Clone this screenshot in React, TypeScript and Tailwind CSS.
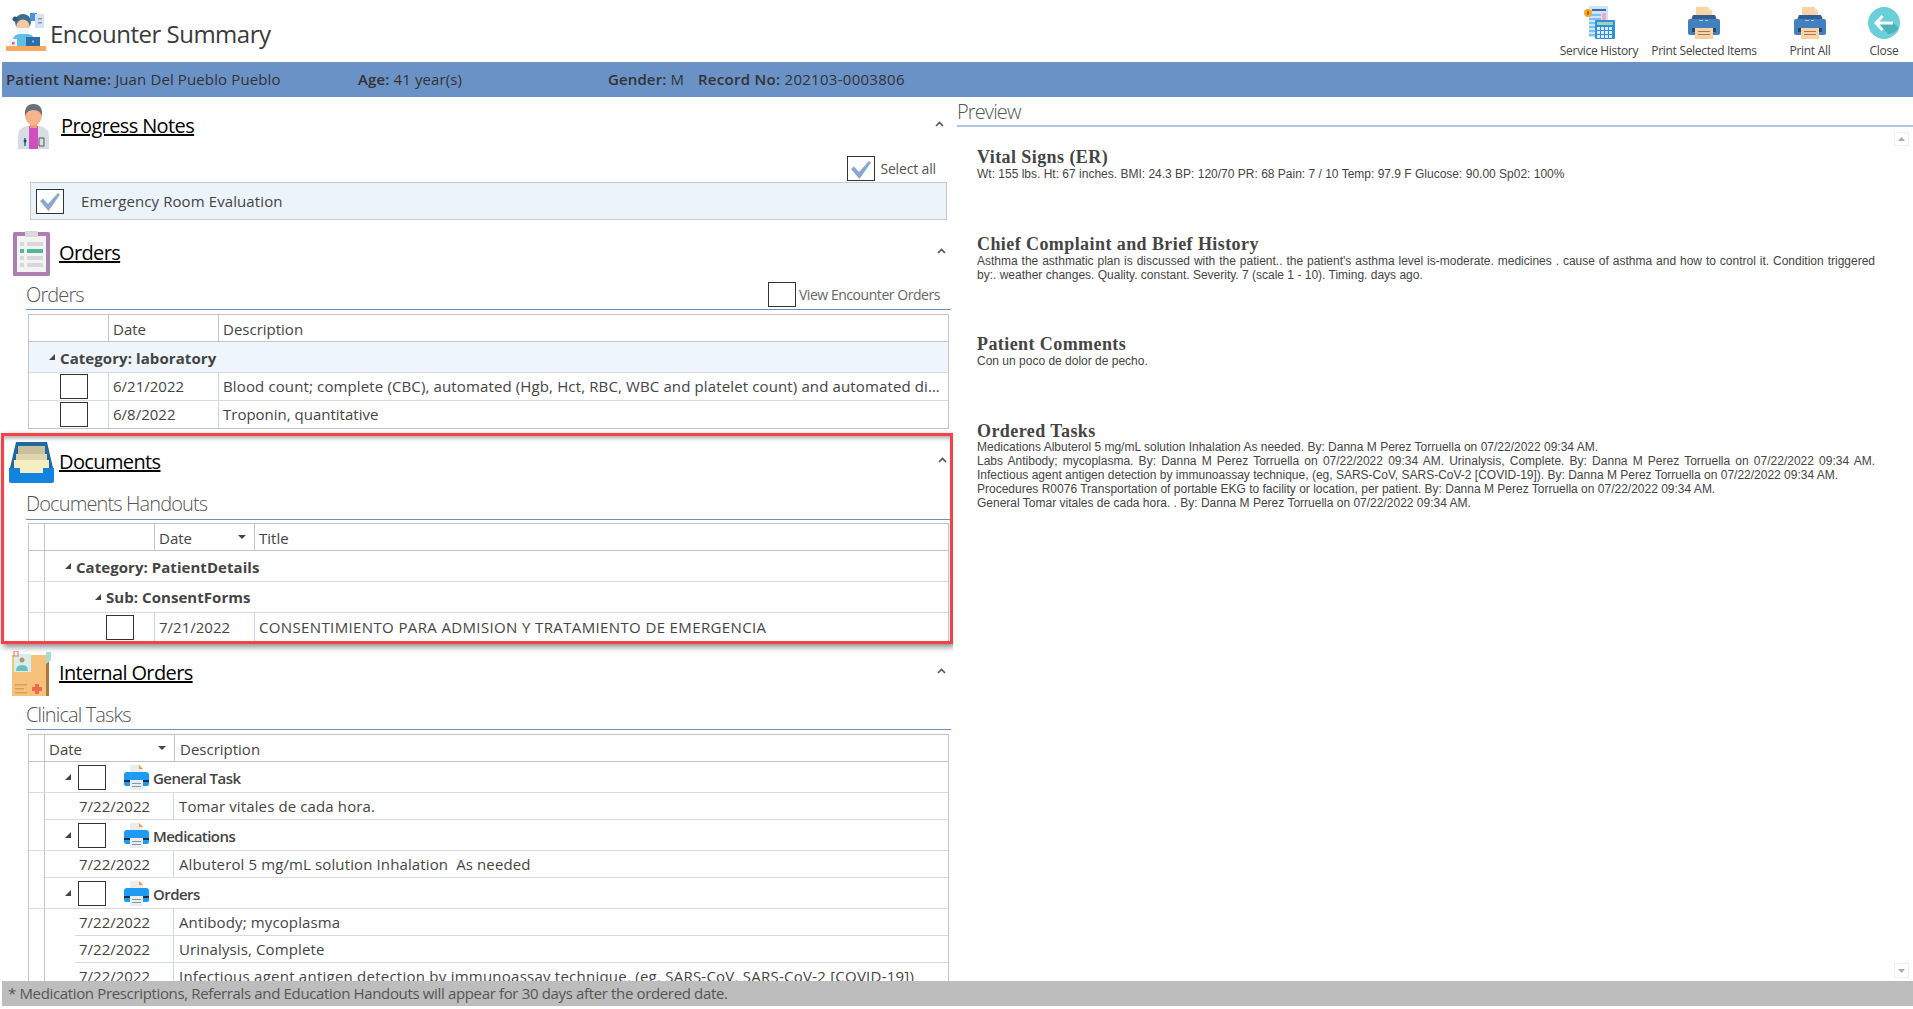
import React from 'react';

/* ---------- small drawings ---------- */

const NurseIcon = () => (
  <svg width="40" height="38" viewBox="0 0 40 38" className="shrink-0">
    <rect x="24" y="0" width="7" height="8" fill="#4d90e0" />
    <rect x="29" y="1" width="9" height="14" fill="#d5e2f2" />
    <rect x="32" y="5" width="4" height="1.5" fill="#7f9cc0" />
    <rect x="32" y="9" width="4" height="1.5" fill="#7f9cc0" />
    <circle cx="17" cy="9" r="8" fill="#3d6f8e" />
    <circle cx="9" cy="6" r="2.5" fill="#2f5a75" />
    <ellipse cx="17" cy="13" rx="6.5" ry="6.5" fill="#f7c6a3" />
    <path d="M10.5 15 h13 v3 a6.5 5 0 0 1 -13 0z" fill="#f3f6f8" />
    <path d="M7 33 v-6 q0-5 6-6 h9 q6 1 6 6 v6z" fill="#62bde8" />
    <rect x="3" y="26" width="8" height="8" fill="#f2f2f5" />
    <rect x="6" y="29" width="2.5" height="2.5" fill="#e8558c" />
    <rect x="20" y="24" width="14" height="9" fill="#2c6fa8" />
    <circle cx="27" cy="28.5" r="1" fill="#9fd0f0" />
    <rect x="0" y="33" width="40" height="5" fill="#f8a95e" />
  </svg>
);

const DoctorIcon = () => (
  <svg width="31" height="45" viewBox="0 0 31 45" className="shrink-0">
    <path d="M0 45 v-13 q0-8 9-10 h13 q9 2 9 10 v13z" fill="#d9dde2" />
    <rect x="11" y="22" width="9" height="23" fill="#cf4fc0" />
    <rect x="12" y="14" width="7" height="10" fill="#ee9e6c" />
    <ellipse cx="15.5" cy="11" rx="8.5" ry="10.5" fill="#f6b48c" />
    <path d="M7 12 q-1-12 8.5-12 q9.5 0 8.5 12 q-2-6-8.5-6 q-6.500 0-8.500 6z" fill="#6b6f78" />
    <rect x="6" y="34" width="2" height="8" fill="#2a98c8" />
    <circle cx="7" cy="37" r="1.500" fill="#38424c" />
    <path d="M21 34 h5 v8 h-5z" fill="none" stroke="#4d5660" strokeWidth="1" />
  </svg>
);

const ClipboardIcon = () => (
  <svg width="37" height="45" viewBox="0 0 37 45" className="shrink-0">
    <rect x="0" y="1" width="37" height="44" rx="1.500" fill="#ad7fb0" />
    <rect x="4" y="5" width="29" height="36" fill="#f3f3f3" />
    <rect x="12" y="0" width="13" height="6" rx="1" fill="#d9d9d9" />
    {[11, 25, 32].map((y) => (
      <g key={y}>
        <rect x="7" y={y} width="4" height="4" fill="#d8d8d8" />
        <rect x="14" y={y} width="16" height="4" fill="#d8d8d8" />
      </g>
    ))}
    <rect x="7" y="18" width="4" height="4" fill="#4db89a" />
    <rect x="14" y="18" width="16" height="4" fill="#4db89a" />
  </svg>
);

const TrayIcon = () => (
  <svg width="45" height="41" viewBox="0 0 45 41" className="shrink-0">
    <path d="M7 0 h31 l6 26 h-43z" fill="#1f689f" />
    <rect x="9" y="4" width="27" height="9" fill="#c9c09b" />
    <rect x="7" y="12" width="31" height="8" fill="#dfd6ad" />
    <path d="M5 18 h35 v8 h-6 v5 h-23 v-5 h-6z" fill="#f5eec2" />
    <path d="M0 26 h11 v5 h23 v-5 h11 v13 q0 2-2 2 h-41 q-2 0-2-2z" fill="#1483e0" />
  </svg>
);

const PackageIcon = () => (
  <svg width="39" height="45" viewBox="0 0 39 45" className="shrink-0">
    <rect x="0" y="4" width="36" height="41" fill="#f6c27b" />
    <rect x="34" y="8" width="3" height="37" fill="#a97743" />
    <path d="M34 1 h5 v8 l-5 4z" fill="#a5dcd8" />
    <rect x="2" y="3" width="17" height="18" fill="#d5eeee" />
    <rect x="2" y="0" width="4" height="5" fill="#fff" stroke="#e86a5a" strokeWidth="1" />
    <circle cx="10" cy="9" r="2.500" fill="#c98f63" />
    <path d="M4 20 q0-6 6-6 q6 0 6 6z" fill="#6cc0b8" />
    <rect x="3" y="33" width="12" height="1.500" fill="#d69f5c" />
    <rect x="3" y="37" width="9" height="1.500" fill="#d69f5c" />
    <rect x="3" y="41" width="12" height="1.500" fill="#d69f5c" />
    <path d="M23 33 h4 v3 h3 v4 h-3 v3 h-4 v-3 h-3 v-4 h3z" fill="#ef6a4a" />
  </svg>
);

const BigPrinter = () => (
  <svg width="32" height="32" viewBox="0 0 32 32">
    <path d="M8 0 h12 l4 4 v9 h-16z" fill="#fad2a4" />
    <path d="M20 0 l4 4 h-4z" fill="#e5e3dd" />
    <path d="M5 8 h22 l2 5 h-26z" fill="#2f5f95" />
    <rect x="0" y="12" width="32" height="16" rx="2" fill="#4480c0" />
    <rect x="11" y="13" width="4" height="1" fill="#a9c6e6" />
    <rect x="17" y="13" width="3" height="1" fill="#a9c6e6" />
    <rect x="4" y="21" width="24" height="4" fill="#24466e" />
    <rect x="7" y="21" width="18" height="11" fill="#fad2a4" />
    <rect x="10" y="24" width="12" height="1" fill="#9a7a58" />
    <rect x="10" y="27" width="12" height="1" fill="#9a7a58" />
  </svg>
);

const SmallPrinter = () => (
  <svg width="25" height="25" viewBox="0 0 25 25" className="shrink-0">
    <path d="M6 0 h9 l4 4 v6 h-13z" fill="#e8edf1" />
    <path d="M15 0 l4 4 h-4z" fill="#f59a2e" />
    <path d="M3 7 h19 q3 0 3 3 v9 q0 2-2 2 h-21 q-2 0-2-2 v-9 q0-3 3-3z" fill="#1e9bf0" />
    <rect x="0" y="15" width="25" height="2" fill="#1c2f42" />
    <rect x="6" y="15" width="13" height="10" fill="#e8edf1" />
    <rect x="8" y="18" width="9" height="1" fill="#8a949c" />
    <rect x="8" y="21" width="9" height="1" fill="#8a949c" />
  </svg>
);

const HistoryIcon = () => (
  <svg width="31" height="33" viewBox="0 0 31 33">
    <rect x="5" y="0" width="19" height="31" fill="#cfe2f8" />
    <rect x="8" y="3" width="14" height="2" fill="#3d6db0" />
    {[8, 12, 16, 20, 24, 28].map((y) => (
      <rect key={y} x="5" y={y} width="12" height="2" fill="#7cc0f0" />
    ))}
    <rect x="18" y="7" width="4" height="7" fill="#f2a8c4" />
    <circle cx="4" cy="7" r="4" fill="#f5a623" />
    <rect x="3" y="5" width="2" height="4" fill="#b06d10" />
    <rect x="11" y="14" width="20" height="19" rx="1" fill="#2f8ee0" />
    <rect x="13" y="16" width="16" height="3" fill="#9fd0b8" />
    <g fill="#d8ecfb">
      {[21, 25, 29].map((y) =>
        [13, 17, 21, 25].map((x) => <rect key={`${x}-${y}`} x={x} y={y} width="3" height="3" />)
      )}
    </g>
  </svg>
);

const BackIcon = () => (
  <svg width="32" height="32" viewBox="0 0 32 32">
    <circle cx="16" cy="16" r="16" fill="#69cfd8" />
    <path d="M10 16 L20 27 A16 16 0 0 0 31 21 L23 14z" fill="#4fb1bd" />
    <path d="M14.500 9 L8 16 L14.500 23 M8.500 16 H25" fill="none" stroke="#fff" strokeWidth="3" />
  </svg>
);

const Chevron = ({ className = '' }: { className?: string }) => (
  <svg width="9" height="6" viewBox="0 0 9 6" className={className}>
    <path d="M1 5 L4.500 1.500 L8 5" fill="none" stroke="#555" strokeWidth="1.600" />
  </svg>
);

const Expander = ({ className = '' }: { className?: string }) => (
  <svg width="6" height="6" viewBox="0 0 6 6" className={`shrink-0 ${className}`}>
    <path d="M6 0 V6 H0z" fill="#444" />
  </svg>
);

const SortArrow = () => (
  <svg width="8" height="4" viewBox="0 0 8 4" className="absolute right-[8px] top-[11px]">
    <path d="M0 0 H8 L4 4z" fill="#444" />
  </svg>
);

const Tick = ({ size = 26 }: { size?: number }) => (
  <svg width={size} height={size - 4} viewBox="0 0 26 22">
    <path d="M3 11 L6 8.500 L11 14 L21 3 L23 4.500 L11.500 21z" fill="#88a8d2" />
  </svg>
);

/* ---------- pieces ---------- */

const Checkbox = ({ checked = false, className = '' }: { checked?: boolean; className?: string }) => (
  <div className={`w-[28px] h-[25px] shrink-0 border border-[#333] bg-white flex items-center justify-center ${className}`}>
    {checked && <Tick />}
  </div>
);

const SectionHeader = ({
  icon,
  title,
  iconBox,
  chevronRight,
}: {
  icon: React.ReactNode;
  title: string;
  iconBox: string;
  chevronRight: string;
}) => (
  <div className="h-[48px] flex items-center relative">
    <div className={`flex items-center ${iconBox}`}>{icon}</div>
    <a className="text-[20px] leading-[28px] text-black underline tracking-[-0.62px]">{title}</a>
    <Chevron className={`absolute top-[19px] ${chevronRight}`} />
  </div>
);

const SubHeader = ({ title, children, className = '' }: { title: string; children?: React.ReactNode; className?: string }) => (
  <div className={`h-[29px] flex items-center justify-between border-b border-[#6a92c6] ${className}`}>
    <span className="text-[20px] font-light text-[#555] tracking-[-0.88px]">{title}</span>
    {children}
  </div>
);

const Cell = ({ className = '', children }: { className?: string; children?: React.ReactNode }) => (
  <div className={`h-full flex items-center shrink-0 truncate ${className}`}>{children}</div>
);

const GroupRow = ({ label }: { label: string }) => (
  <div className="h-[31px] flex items-center border-b border-[#dadada]">
    <div className="w-[16px] h-full border-r border-[#c4c4c4] shrink-0" />
    <Expander className="ml-[20px]" />
    <Checkbox className="ml-[7px]" />
    <div className="ml-[18px] flex items-center"><SmallPrinter /></div>
    <span className="ml-[4px] pt-[2px] font-semibold tracking-[-0.55px]">{label}</span>
  </div>
);

const TaskRow = ({
  date,
  text,
  inset = false,
  tracking = 'tracking-[0.12px]',
}: {
  date: string;
  text: string;
  inset?: boolean;
  tracking?: string;
}) => (
  <div className="h-[27px] flex">
    <div className="w-[16px] border-r border-[#c4c4c4] shrink-0" />
    {inset && <div className="w-[30px] shrink-0" />}
    <div className={`flex flex-1 min-w-0 border-b border-[#dadada] ${inset ? '' : 'pl-[30px]'}`}>
      <Cell className="w-[99px] pl-[4px] border-r border-[#c9d6e6]">{date}</Cell>
      <Cell className={`flex-1 pl-[5px] whitespace-pre ${tracking}`}>{text}</Cell>
    </div>
  </div>
);

/* ---------- page ---------- */

export default function App() {
  return (
    <div className="w-[1913px] h-[1009px] overflow-hidden bg-white flex flex-col font-['Open_Sans',sans-serif] text-[15px] text-[#444]">
      {/* Title bar */}
      <header className="h-[62px] flex shrink-0">
        <div className="ml-[6px] mt-[13px]"><NurseIcon /></div>
        <h1 className="ml-[4px] mt-[17px] text-[24px] leading-[34px] text-[#3a3a3a] tracking-[-0.5px]">Encounter Summary</h1>
        <div className="ml-auto flex text-[12px] text-[#444] tracking-[-0.3px]">
          <div className="w-[92px] flex flex-col items-center pt-[6px]"><HistoryIcon /><span className="mt-[3px]">Service History</span></div>
          <div className="w-[108px] ml-[5px] flex flex-col items-center pt-[7px]"><BigPrinter /><span className="mt-[3px]">Print Selected Items</span></div>
          <div className="w-[60px] ml-[22px] flex flex-col items-center pt-[7px]"><BigPrinter /><span className="mt-[3px]">Print All</span></div>
          <div className="w-[58px] ml-[15px] flex flex-col items-center pt-[7px]"><BackIcon /><span className="mt-[3px]">Close</span></div>
        </div>
      </header>

      {/* Patient bar */}
      <div className="ml-[2px] h-[35px] shrink-0 bg-[#6a92c6] flex items-center pl-[4px] text-[#333] tracking-[0.12px]">
        <div className="w-[352px]"><b className="font-semibold">Patient Name:</b> Juan Del Pueblo Pueblo</div>
        <div className="w-[250px]"><b className="font-semibold">Age:</b> 41 year(s)</div>
        <div className="w-[90px]"><b className="font-semibold">Gender:</b> M</div>
        <div className="tracking-[0.28px]"><b className="font-semibold">Record No:</b> 202103-0003806</div>
      </div>

      <main className="flex h-[884px] shrink-0 overflow-hidden">
        {/* Left column */}
        <div className="w-[953px] shrink-0 overflow-hidden">
          <div className="mt-[5px]">
            <SectionHeader icon={<DoctorIcon />} title="Progress Notes" iconBox="w-[61px] pl-[18px]" chevronRight="right-[9px]" />
          </div>
          <div className="mt-[6px] h-[26px] flex items-start justify-end pr-[17px]">
            <Checkbox checked />
            <span className="ml-[5px] mt-[2px] text-[14px] text-[#555] tracking-[-0.15px]">Select all</span>
          </div>
          <div className="ml-[30px] w-[917px] h-[38px] border border-[#c8c8c8] bg-[#ebf3fb] flex items-center pl-[5px]">
            <Checkbox checked />
            <span className="ml-[17px] tracking-[0.1px]">Emergency Room Evaluation</span>
          </div>

          {/* Orders */}
          <div className="mt-[9px]">
            <SectionHeader icon={<ClipboardIcon />} title="Orders" iconBox="w-[59px] pl-[13px]" chevronRight="right-[7px]" />
          </div>
          <SubHeader title="Orders" className="ml-[26px] mr-[2px] mt-[4px]">
            <div className="flex items-center pr-[11px] -mt-[2px]">
              <Checkbox />
              <span className="ml-[3px] text-[14px] text-[#666] tracking-[-0.45px]">View Encounter Orders</span>
            </div>
          </SubHeader>
          <div className="ml-[28px] w-[921px] mt-[4px] border border-[#c4c4c4]">
            <div className="h-[27px] flex border-b border-[#c4c4c4]">
              <Cell className="w-[80px] border-r border-[#c4c4c4]" />
              <Cell className="w-[110px] pl-[4px] pt-[2px] border-r border-[#c4c4c4]">Date</Cell>
              <Cell className="flex-1 pl-[4px] pt-[2px]">Description</Cell>
            </div>
            <div className="h-[31px] flex items-center bg-[#eef5fc] border-b border-[#dadada] pl-[20px]">
              <Expander />
              <span className="ml-[5px] pt-[2px] font-bold tracking-[0.08px]">Category: laboratory</span>
            </div>
            <div className="h-[28px] flex border-b border-[#dadada]">
              <Cell className="w-[80px] pl-[31px] border-r border-[#c9d6e6]"><Checkbox /></Cell>
              <Cell className="w-[110px] pl-[4px] border-r border-[#c9d6e6]">6/21/2022</Cell>
              <Cell className="flex-1 min-w-0 pl-[4px] pr-[8px] tracking-[0.13px]">
                <span className="truncate">Blood count; complete (CBC), automated (Hgb, Hct, RBC, WBC and platelet count) and automated differential</span>
              </Cell>
            </div>
            <div className="h-[27px] flex">
              <Cell className="w-[80px] pl-[31px] border-r border-[#c9d6e6]"><Checkbox /></Cell>
              <Cell className="w-[110px] pl-[4px] border-r border-[#c9d6e6]">6/8/2022</Cell>
              <Cell className="flex-1 pl-[4px]">Troponin, quantitative</Cell>
            </div>
          </div>

          {/* Documents, marked with the red frame */}
          <section className="mt-[4px] ml-[1px] w-[952px] h-[211px] border-[3px] border-[#f44248] shadow-[2px_3px_6px_rgba(0,0,0,0.45),inset_0_4px_4px_-2px_rgba(0,0,0,0.35)] overflow-hidden">
            <div className="mt-[2px]">
              <SectionHeader icon={<TrayIcon />} title="Documents" iconBox="w-[55px] pl-[5px]" chevronRight="right-[3px]" />
            </div>
            <SubHeader title="Documents Handouts" className="ml-[22px] mt-[3px] h-[31px]" />
            <div className="ml-[24px] w-[921px] mt-[3px] border border-[#c4c4c4]">
              <div className="h-[27px] flex border-b border-[#c4c4c4]">
                <Cell className="w-[16px] border-r border-[#c4c4c4]" />
                <Cell className="w-[110px] border-r border-[#c4c4c4]" />
                <div className="w-[100px] h-full pl-[4px] pt-[2px] border-r border-[#c4c4c4] flex items-center relative">Date<SortArrow /></div>
                <Cell className="flex-1 pl-[4px] pt-[2px]">Title</Cell>
              </div>
              <div className="h-[31px] flex items-center border-b border-[#dadada]">
                <div className="w-[16px] h-full border-r border-[#c4c4c4]" />
                <Expander className="ml-[20px]" />
                <span className="ml-[5px] pt-[2px] font-bold tracking-[0.05px]">Category: PatientDetails</span>
              </div>
              <div className="h-[31px] flex items-center border-b border-[#dadada]">
                <div className="w-[16px] h-full border-r border-[#c4c4c4]" />
                <Expander className="ml-[50px]" />
                <span className="ml-[5px] font-bold tracking-[0.05px]">Sub: ConsentForms</span>
              </div>
              <div className="h-[28px] flex">
                <Cell className="w-[16px] border-r border-[#c4c4c4]" />
                <Cell className="w-[110px] pl-[61px] border-r border-[#c9d6e6]"><Checkbox /></Cell>
                <Cell className="w-[100px] pl-[4px] border-r border-[#c9d6e6]">7/21/2022</Cell>
                <Cell className="flex-1 pl-[4px] tracking-[0.37px]">CONSENTIMIENTO PARA ADMISION Y TRATAMIENTO DE EMERGENCIA</Cell>
              </div>
            </div>
          </section>

          {/* Internal orders */}
          <div className="mt-[5px]">
            <SectionHeader icon={<PackageIcon />} title="Internal Orders" iconBox="w-[59px] pl-[12px]" chevronRight="right-[7px]" />
          </div>
          <SubHeader title="Clinical Tasks" className="ml-[26px] mr-[2px] mt-[4px]" />
          <div className="ml-[28px] w-[921px] mt-[4px] border-x border-t border-[#c4c4c4]">
            <div className="h-[27px] flex border-b border-[#c4c4c4]">
              <Cell className="w-[16px] border-r border-[#c4c4c4]" />
              <div className="w-[130px] h-full pl-[4px] pt-[2px] border-r border-[#c4c4c4] flex items-center relative">Date<SortArrow /></div>
              <Cell className="flex-1 pl-[5px] pt-[2px]">Description</Cell>
            </div>
            <GroupRow label="General Task" />
            <TaskRow date="7/22/2022" text="Tomar vitales de cada hora." />
            <GroupRow label="Medications" />
            <TaskRow date="7/22/2022" text="Albuterol 5 mg/mL solution Inhalation  As needed" />
            <GroupRow label="Orders" />
            <TaskRow inset date="7/22/2022" text="Antibody; mycoplasma" />
            <TaskRow inset date="7/22/2022" text="Urinalysis, Complete" />
            <TaskRow inset date="7/22/2022" tracking="tracking-[0.24px]" text="Infectious agent antigen detection by immunoassay technique, (eg, SARS-CoV, SARS-CoV-2 [COVID-19])" />
          </div>
        </div>

        {/* Preview */}
        <div className="ml-[4px] flex-1 min-w-0 relative font-['Liberation_Sans',sans-serif] text-[12px] leading-[14px] text-[#444]">
          <div className="h-[30px] border-b-2 border-[#b0c6e4] font-['Open_Sans',sans-serif] text-[20px] leading-[30px] font-light text-[#555] tracking-[-0.88px]">Preview</div>
          <div className="pl-[20px] w-[918px]">
            <h3 className="mt-[20px] h-[20px] font-['Liberation_Serif',serif] text-[18px] leading-[21px] font-bold tracking-[0.42px]">Vital Signs (ER)</h3>
            <p>Wt: 155 lbs. Ht: 67 inches. BMI: 24.3 BP: 120/70 PR: 68 Pain: 7 / 10 Temp: 97.9 F Glucose: 90.00 Sp02: 100%</p>

            <h3 className="mt-[53px] h-[20px] font-['Liberation_Serif',serif] text-[18px] leading-[21px] font-bold tracking-[0.42px]">Chief Complaint and Brief History</h3>
            <p className="text-justify">Asthma the asthmatic plan is discussed with the patient.. the patient's asthma level is-moderate. medicines . cause of asthma and how to control it. Condition triggered by:. weather changes. Quality. constant. Severity. 7 (scale 1 - 10). Timing. days ago.</p>

            <h3 className="mt-[52px] h-[20px] font-['Liberation_Serif',serif] text-[18px] leading-[21px] font-bold tracking-[0.42px]">Patient Comments</h3>
            <p>Con un poco de dolor de pecho.</p>

            <h3 className="mt-[53px] h-[20px] font-['Liberation_Serif',serif] text-[18px] leading-[21px] font-bold tracking-[0.42px]">Ordered Tasks</h3>
            <div className="-mt-px">
              <p>Medications Albuterol 5 mg/mL solution Inhalation As needed. By: Danna M Perez Torruella on 07/22/2022 09:34 AM.</p>
              <p className="text-justify">Labs Antibody; mycoplasma. By: Danna M Perez Torruella on 07/22/2022 09:34 AM. Urinalysis, Complete. By: Danna M Perez Torruella on 07/22/2022 09:34 AM. Infectious agent antigen detection by immunoassay technique, (eg, SARS-CoV, SARS-CoV-2 [COVID-19]). By: Danna M Perez Torruella on 07/22/2022 09:34 AM.</p>
              <p>Procedures R0076 Transportation of portable EKG to facility or location, per patient. By: Danna M Perez Torruella on 07/22/2022 09:34 AM.</p>
              <p>General Tomar vitales de cada hora. . By: Danna M Perez Torruella on 07/22/2022 09:34 AM.</p>
            </div>
          </div>

          {/* Scroll buttons */}
          <div className="absolute right-[4px] top-[35px] w-[15px] h-[14px] border border-[#eeeeee] flex items-center justify-center">
            <svg width="7" height="4" viewBox="0 0 7 4"><path d="M0 4 H7 L3.500 0z" fill="#aaa" /></svg>
          </div>
          <div className="absolute right-[4px] top-[866px] w-[15px] h-[15px] border border-[#eeeeee] flex items-center justify-center">
            <svg width="7" height="4" viewBox="0 0 7 4"><path d="M0 0 H7 L3.500 4z" fill="#aaa" /></svg>
          </div>
        </div>
      </main>

      {/* Footer note */}
      <footer className="ml-[2px] h-[25px] shrink-0 bg-[#bdbdbd] flex items-center pl-[6px] text-[15px] text-[#555] tracking-[-0.35px]">
        * Medication Prescriptions, Referrals and Education Handouts will appear for 30 days after the ordered date.
      </footer>
    </div>
  );
}
